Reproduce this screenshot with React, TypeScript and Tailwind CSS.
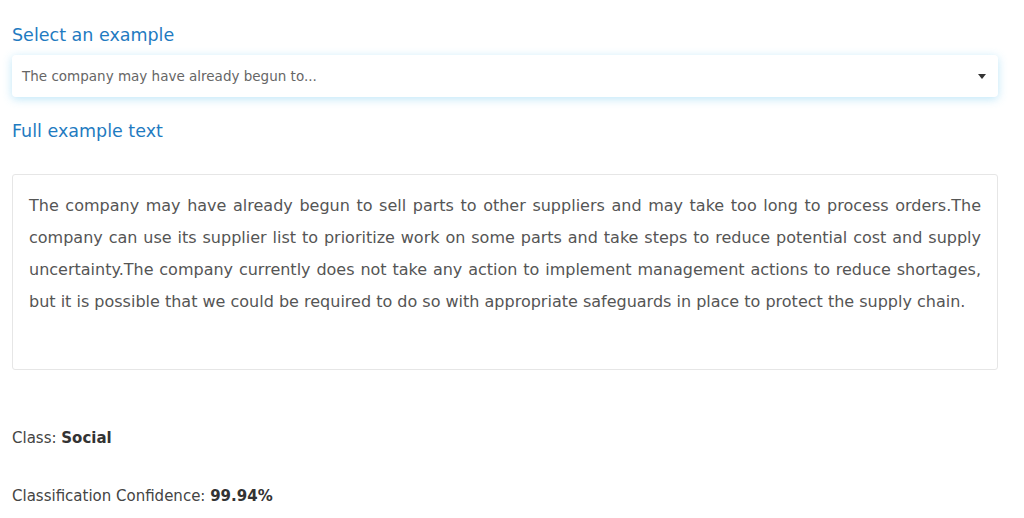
export default function App() {
  const fullText =
    "The company may have already begun to sell parts to other suppliers and may take too long to process orders.The company can use its supplier list to prioritize work on some parts and take steps to reduce potential cost and supply uncertainty.The company currently does not take any action to implement management actions to reduce shortages, but it is possible that we could be required to do so with appropriate safeguards in place to protect the supply chain.";

  return (
    <div className="min-h-[518px] bg-white px-3 pt-[23px] text-[#444] font-['DejaVu_Sans',sans-serif]">
      <h2 className="text-[17.5px] leading-6 text-[#1f7bc1]">Select an example</h2>

      <div className="mt-[8px] flex h-[42px] w-[986px] items-center justify-between rounded-sm bg-white pl-[10px] pr-[12px] shadow-[0_2px_10px_rgba(110,200,240,0.45)]">
        <span className="text-[13.5px] text-[#666]">The company may have already begun to...</span>
        <svg width="8" height="5" viewBox="0 0 8 5">
          <path d="M0 0h8L4 5z" fill="#333" />
        </svg>
      </div>

      <h2 className="mt-[22px] text-[17.5px] leading-6 text-[#1f7bc1]">Full example text</h2>

      <div className="mt-[31px] h-[196px] w-[986px] rounded-[3px] border border-[#e6e6e6] px-4 pt-[15px]">
        <p className="text-justify text-[16px] leading-8 text-[#555]">{fullText}</p>
      </div>

      <p className="mt-[57px] text-[15px] text-[#444]">
        Class: <b className="text-[#333]">Social</b>
      </p>
      <p className="mt-[35px] text-[15px] text-[#444]">
        Classification Confidence: <b className="text-[#333]">99.94%</b>
      </p>
    </div>
  );
}
